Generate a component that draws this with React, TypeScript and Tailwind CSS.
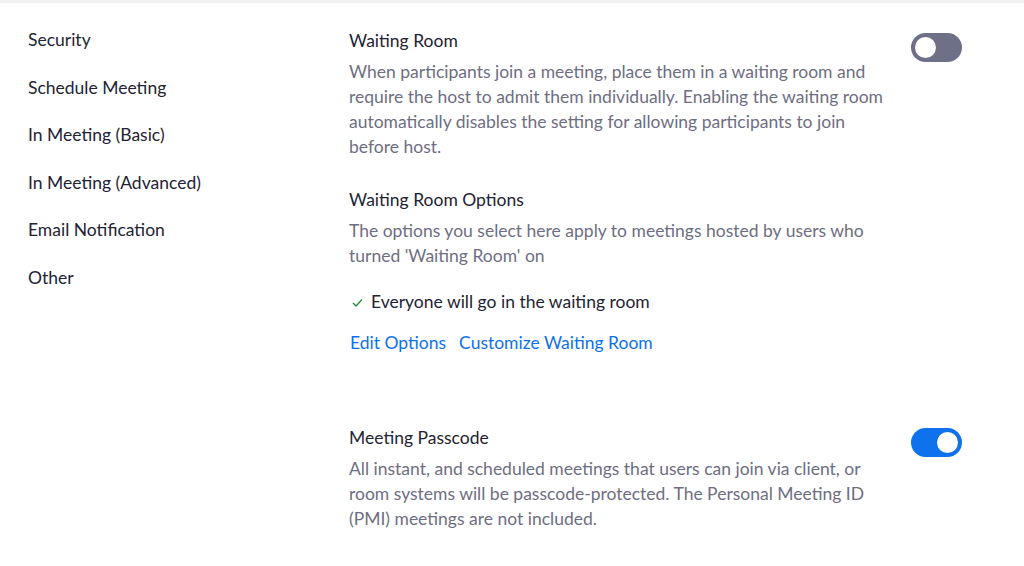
import React from 'react';

const navItems = [
  'Security',
  'Schedule Meeting',
  'In Meeting (Basic)',
  'In Meeting (Advanced)',
  'Email Notification',
  'Other',
];

function Toggle({ on }: { on: boolean }) {
  return (
    <div
      className={`w-[51px] h-[29px] rounded-full flex items-center px-[2px] ${
        on ? 'bg-[#0e72ed] justify-end' : 'bg-[#6e7087] justify-start'
      }`}
    >
      <div
        className={`w-[25px] h-[25px] rounded-full bg-white border-2 ${
          on ? 'border-[#0e72ed]' : 'border-[#6e7087]'
        }`}
      />
    </div>
  );
}

export default function App() {
  return (
    <div
      className="w-[1024px] h-[566px] bg-white overflow-hidden border-t-[3px] border-[#f1f1f3] text-[#232333]"
      style={{ fontFamily: 'Lato, "Open Sans", sans-serif' }}
    >
      <div className="flex">
        {/* Left nav */}
        <nav className="w-[349px] shrink-0 pl-[28px] pt-[25px] flex flex-col gap-[23.5px] text-[17.5px] leading-[24px]">
          {navItems.map((item) => (
            <div key={item}>{item}</div>
          ))}
        </nav>

        {/* Settings */}
        <main className="flex-1 pt-[26px]">
          {/* Waiting Room */}
          <section className="flex">
            <div className="w-[562px]">
              <h3 className="text-[17.5px] leading-[24px]">Waiting Room</h3>
              <p className="mt-[6px] w-[540px] text-[17.5px] leading-[25px] text-[#6e6e82]">
                When participants join a meeting, place them in a waiting room and require the host to admit them
                individually. Enabling the waiting room automatically disables the setting for allowing participants
                to join before host.
              </p>

              <h3 className="mt-[29px] text-[17.5px] leading-[24px]">Waiting Room Options</h3>
              <p className="mt-[6px] w-[540px] text-[17.5px] leading-[25px] text-[#6e6e82]">
                The options you select here apply to meetings hosted by users who turned 'Waiting Room' on
              </p>

              <div className="mt-[22px] flex items-center gap-[7px] text-[17.5px] leading-[24px]">
                <svg className="ml-[2px]" width="13" height="13" viewBox="0 0 13 13" fill="none">
                  <path d="M2 7l3 3 6-6.5" stroke="#1f8a3a" strokeWidth="1.3" />
                </svg>
                <span>Everyone will go in the waiting room</span>
              </div>

              <div className="mt-[17px] flex gap-[13px] text-[17.5px] leading-[24px] text-[#0e71eb] pl-[1px]">
                <a>Edit Options</a>
                <a>Customize Waiting Room</a>
              </div>
            </div>
            <div className="pt-[4px]">
              <Toggle on={false} />
            </div>
          </section>

          {/* Meeting Passcode */}
          <section className="flex mt-[71px]">
            <div className="w-[562px]">
              <h3 className="text-[17.5px] leading-[24px]">Meeting Passcode</h3>
              <p className="mt-[6px] w-[540px] text-[17.5px] leading-[25px] text-[#6e6e82]">
                All instant, and scheduled meetings that users can join via client, or room systems will be
                passcode-protected. The Personal Meeting ID (PMI) meetings are not included.
              </p>
            </div>
            <div className="pt-[2px]">
              <Toggle on={true} />
            </div>
          </section>
        </main>
      </div>
    </div>
  );
}
